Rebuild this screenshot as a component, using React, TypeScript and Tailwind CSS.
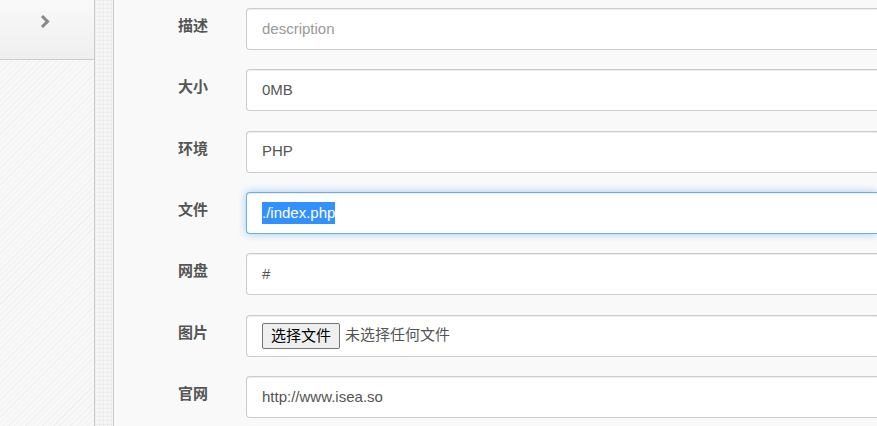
import React from 'react';

const font = 'font-["Liberation_Sans","Noto_Sans_CJK_SC",sans-serif]';

interface RowProps {
  label: string;
  children: React.ReactNode;
  focused?: boolean;
}

const FormRow: React.FC<RowProps> = ({ label, children, focused }) => {
  return (
    <div className="flex items-start">
      <label className="w-[68px] shrink-0 pt-2 text-[15px] leading-5 font-bold text-[#555]">{label}</label>
      <div
        className={
          'flex h-[42px] flex-1 items-center rounded-l-[4px] border border-r-0 bg-white pl-[15px] text-[15px] ' +
          (focused
            ? 'border-[#66afe9] shadow-[inset_0_1px_1px_rgba(0,0,0,0.075),0_0_8px_rgba(102,175,233,0.6)]'
            : 'border-[#ccc] shadow-[inset_0_1px_1px_rgba(0,0,0,0.075)]')
        }
      >
        {children}
      </div>
    </div>
  );
};

const Sidebar: React.FC = () => {
  return (
    <div className="flex w-[95px] shrink-0 flex-col border-r border-[#ccc]">
      <div className="flex h-[60px] items-start justify-center border-b border-[#ccc] bg-gradient-to-b from-[#f9f9f9] to-[#efefef] pt-[14px]">
        <svg width="10" height="15" viewBox="0 0 10 15" className="ml-[-5px]">
          <path d="M2 2 L7.5 7.5 L2 13" fill="none" stroke="#888" strokeWidth="3" />
        </svg>
      </div>
      <div className="flex-1 bg-[#f7f7f7] bg-[repeating-linear-gradient(-45deg,#f1f1f1_0px,#f1f1f1_1px,#f8f8f8_1px,#f8f8f8_4px)]" />
    </div>
  );
};

const App: React.FC = () => {
  return (
    <div className={`flex h-[426px] w-[877px] overflow-hidden bg-[#f9f9f9] ${font}`}>
      <Sidebar />
      <div className="w-[19px] shrink-0 border-r border-[#ccc] bg-[#f6f6f6] bg-[linear-gradient(#ececec_1px,transparent_1px),linear-gradient(90deg,#ececec_1px,transparent_1px)] bg-[length:4px_4px]" />
      <div className="flex flex-1 flex-col gap-[19.33px] pt-2 pl-16">
        <FormRow label="描述">
          <span className="text-[#999]">description</span>
        </FormRow>
        <FormRow label="大小">
          <span className="text-[#555]">0MB</span>
        </FormRow>
        <FormRow label="环境">
          <span className="text-[#555]">PHP</span>
        </FormRow>
        <FormRow label="文件" focused>
          <span className="bg-[#3390ff] text-white">./index.php</span>
        </FormRow>
        <FormRow label="网盘">
          <span className="text-[#555]">#</span>
        </FormRow>
        <FormRow label="图片">
          <span className="flex items-center">
            <span className="rounded-[2px] border border-[#767676] bg-[#efefef] px-[8px] py-[2px] text-[15px] leading-5 text-black">
              选择文件
            </span>
            <span className="ml-[5px] text-[#555]">未选择任何文件</span>
          </span>
        </FormRow>
        <FormRow label="官网">
          <span className="text-[#555]">http://www.isea.so</span>
        </FormRow>
      </div>
    </div>
  );
};

export default App;
